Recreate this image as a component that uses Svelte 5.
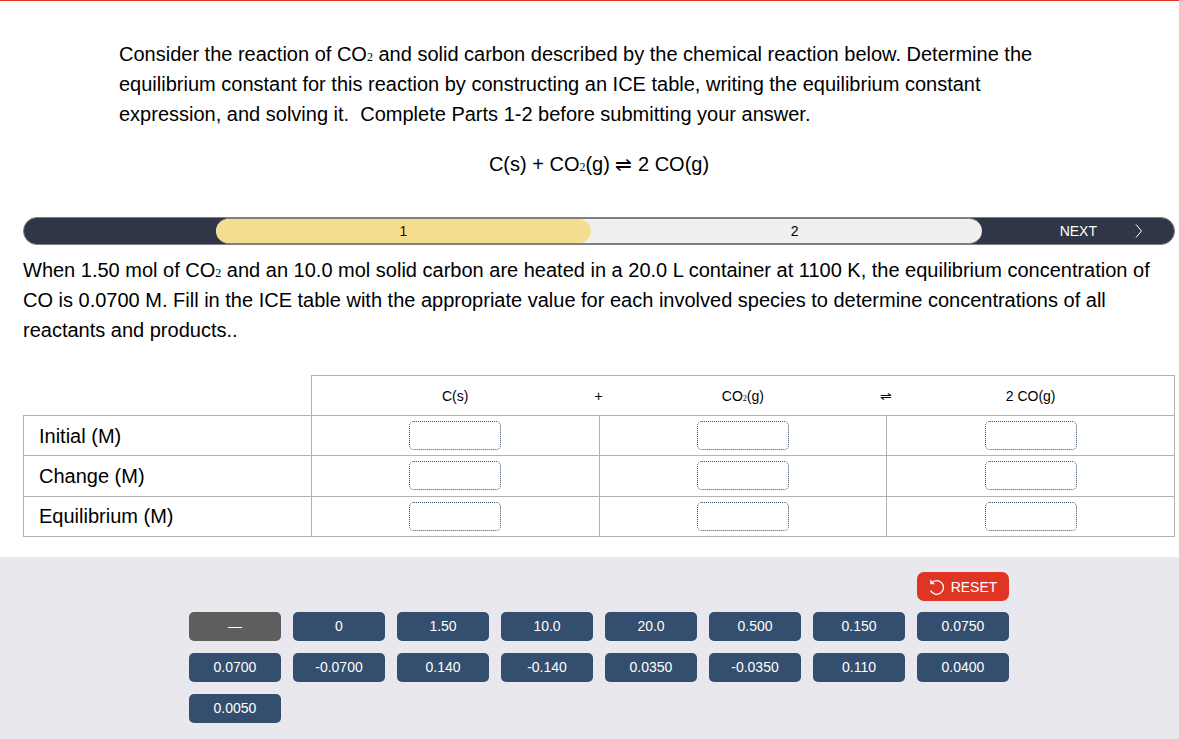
<script>
	const species = [
		{ id: 'c', parts: ['C(s)'], operator: '+' },
		{ id: 'co2', parts: ['CO', '2', '(g)'], operator: '⇌' },
		{ id: 'co', parts: ['2 CO(g)'], operator: '' }
	];

	const rows = ['Initial (M)', 'Change (M)', 'Equilibrium (M)'];

	const tiles = [
		'0', '1.50', '10.0', '20.0', '0.500', '0.150', '0.0750',
		'0.0700', '-0.0700', '0.140', '-0.140', '0.0350', '-0.0350', '0.110', '0.0400',
		'0.0050'
	];

	let step = $state(1);
	let selected = $state(null);
	let answers = $state({});

	function place(key) {
		if (selected === null) return;
		answers[key] = selected;
		selected = null;
	}

	function reset() {
		answers = {};
		selected = null;
	}
</script>

<main class="page">
	<section class="intro">
		<p>
			Consider the reaction of CO<sub>2</sub> and solid carbon described by the chemical reaction below.
			Determine the equilibrium constant for this reaction by constructing an ICE table, writing the
			equilibrium constant expression, and solving it.&nbsp; Complete Parts 1-2 before submitting your
			answer.
		</p>
		<p class="equation">C(s) + CO<sub>2</sub>(g) ⇌ 2 CO(g)</p>
	</section>

	<section class="content">
		<nav class="steps" aria-label="Parts">
			<div class="track">
				<button class="step" class:active={step === 1} onclick={() => (step = 1)}>1</button>
				<button class="step" class:active={step === 2} onclick={() => (step = 2)}>2</button>
			</div>
			<button class="next" onclick={() => (step = 2)}>
				NEXT
				<svg width="8" height="14" viewBox="0 0 8 14" aria-hidden="true">
					<path d="M1 0.5 L6.5 7 L1 13.5" fill="none" stroke="currentColor" />
				</svg>
			</button>
		</nav>

		<p class="question">
			When 1.50 mol of CO<sub>2</sub> and an 10.0 mol solid carbon are heated in a 20.0 L container at 1100
			K, the equilibrium concentration of CO is 0.0700 M. Fill in the ICE table with the appropriate value
			for each involved species to determine concentrations of all reactants and products..
		</p>

		<table class="ice">
			<thead>
				<tr>
					<td class="corner"></td>
					{#each species as s}
						<th scope="col">
							{#each s.parts as part, i}{#if i === 1}<sub>{part}</sub>{:else}{part}{/if}{/each}
							{#if s.operator}<span class="operator">{s.operator}</span>{/if}
						</th>
					{/each}
				</tr>
			</thead>
			<tbody>
				{#each rows as row}
					<tr>
						<th scope="row">{row}</th>
						{#each species as s}
							{@const key = row + s.id}
							<td>
								<button class="slot" aria-label="{row} {s.parts.join('')}" onclick={() => place(key)}>
									{answers[key] ?? ''}
								</button>
							</td>
						{/each}
					</tr>
				{/each}
			</tbody>
		</table>
	</section>

	<section class="tray">
		<div class="tray-inner">
			<button class="reset" onclick={reset}>
				<svg width="16" height="16" viewBox="0 0 16 16" aria-hidden="true">
					<path d="M2.4 4.2 A6.8 6.8 0 1 1 1.6 11.6" fill="none" stroke="currentColor" stroke-width="1.3" />
					<path d="M1.2 0.4 L1.2 5.2 L6 5.2 Z" fill="currentColor" />
				</svg>
				RESET
			</button>
			<div class="tiles">
				<button class="tile blank" onclick={() => (selected = '')}>—</button>
				{#each tiles as tile}
					<button class="tile" class:selected={selected === tile} onclick={() => (selected = tile)}>
						{tile}
					</button>
				{/each}
			</div>
		</div>
	</section>
</main>

<style>
	:global(body) {
		margin: 0;
		background: #fff;
	}

	.page {
		display: flex;
		flex-direction: column;
		min-height: 100vh;
		box-sizing: border-box;
		border-top: 1px solid #e03524;
		font-family: 'Liberation Sans', Arial, sans-serif;
		font-size: 20px;
		line-height: 30px;
		color: #000;
	}

	p {
		margin: 0;
	}

	button {
		padding: 0;
		border: 0;
		font-family: inherit;
		font-size: 14px;
		cursor: pointer;
	}

	sub {
		font-family: 'Liberation Serif', 'Times New Roman', serif;
		font-size: 12px;
		line-height: 1;
		vertical-align: baseline;
	}

	.intro {
		padding: 38px 100px 0 119px;
	}

	.equation {
		margin-top: 20px;
		text-align: center;
	}

	.content {
		padding: 38px 4px 20px 23px;
	}

	.steps {
		display: flex;
		height: 28px;
		box-sizing: border-box;
		border: 1px solid #808080;
		border-radius: 14px;
		background: #303646;
		overflow: hidden;
	}

	.track {
		display: flex;
		flex: 1;
		gap: 16px;
		margin-left: 16.66%;
		border-top: 1px solid #808080;
		border-bottom: 1px solid #808080;
		border-radius: 13px;
		background: #efefef;
		overflow: hidden;
	}

	.step {
		flex: 1;
		padding-bottom: 1px;
		border-radius: 12px;
		background: transparent;
		color: #000;
	}

	.step.active {
		background: #f5dd90;
		color: #400;
	}

	.next {
		display: flex;
		width: 16.66%;
		align-items: center;
		justify-content: flex-end;
		gap: 38px;
		padding: 0 31px 1px 0;
		background: transparent;
		color: #fff;
	}

	.question {
		margin-top: 10px;
	}

	.ice {
		width: 100%;
		height: 162px;
		margin-top: 30px;
		border-collapse: collapse;
		table-layout: fixed;
	}

	.ice th,
	.ice td {
		height: 39px;
		padding: 0;
		border: 1px solid #b3b3b3;
		font-weight: normal;
		text-align: center;
	}

	.ice .corner {
		border-top-color: transparent;
		border-left-color: transparent;
	}

	.ice thead th {
		position: relative;
		border-left-color: transparent;
		border-right: 0;
		font-size: 14px;
	}

	.ice thead th:nth-child(2) {
		border-left-color: #b3b3b3;
	}

	.ice thead th:last-child {
		border-right: 1px solid #b3b3b3;
	}

	.ice thead sub {
		font-size: 8px;
	}

	.operator {
		position: absolute;
		right: 0;
		transform: translateX(50%);
	}

	.ice tbody th {
		padding-left: 15px;
		text-align: left;
	}

	.slot {
		display: block;
		width: 92px;
		height: 29px;
		margin: 0 auto;
		border: 1px dotted #334e6f;
		border-radius: 5px;
		background: #fff;
		color: #000;
	}

	.tray {
		flex: 1;
		padding: 15px 4px 16px 23px;
		background: #e9e8ee;
	}

	.tray-inner {
		display: flex;
		flex-direction: column;
		gap: 11px;
		max-width: 820px;
		margin: 0 auto;
	}

	.reset {
		display: flex;
		align-items: center;
		justify-content: center;
		align-self: flex-end;
		gap: 6px;
		width: 92px;
		height: 29px;
		border-radius: 7px;
		background: #e03524;
		color: #fff;
	}

	.tiles {
		display: flex;
		flex-wrap: wrap;
		gap: 12px;
	}

	.tile {
		width: 92px;
		height: 29px;
		padding-bottom: 1px;
		border-radius: 5px;
		background: #334e6f;
		color: #fff;
	}

	.tile.blank {
		background: #5e5e5e;
	}

	.tile.selected {
		outline: 2px solid #f5dd90;
	}
</style>
